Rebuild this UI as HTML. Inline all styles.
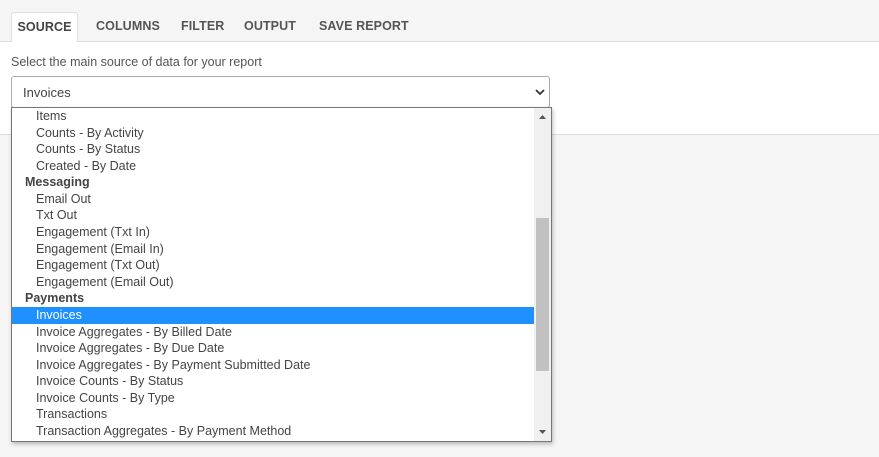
<!DOCTYPE html>
<html><head><style>
*{margin:0;padding:0;box-sizing:border-box}
body{width:879px;height:457px;background:#f5f5f5;font-family:"Liberation Sans",Arial,sans-serif;position:relative;overflow:hidden;color:#555}
.top{position:absolute;left:0;top:0;width:879px;height:42px;background:#f5f5f5;border-bottom:1px solid #ddd}
.tab{position:absolute;top:19px;font-size:12.5px;font-weight:bold;color:#555;letter-spacing:0.1px}
.tab.act{top:12px;left:11px;width:67px;height:31px;background:#fff;border:1px solid #ddd;border-bottom:none;border-radius:3px 3px 0 0;padding-top:7px;text-align:center;color:#444}
.panel{position:absolute;left:0;top:42px;width:879px;height:93px;background:#fff;border-bottom:1px solid #ddd}
.lbl{position:absolute;left:11px;top:55px;font-size:12.5px;color:#555}
.sel{position:absolute;left:11px;top:76px;width:539px;height:32px;border:1px solid #aaa;border-radius:3px;background:#fff;font-size:13px;color:#444;padding:8px 0 0 11px}
.dd{position:absolute;left:11px;top:107px;width:541px;height:335px;border:1px solid #777;background:#fff;box-shadow:1px 2px 4px rgba(0,0,0,.25);overflow:hidden;padding-top:0}
.r{height:16.58px;line-height:16.58px;font-size:12.5px;color:#444;padding-left:24px;width:522px;white-space:nowrap}
.g{padding-left:13px;font-weight:bold}
.h{background:#1e90ff;color:#fff}
.sb{position:absolute;right:0;top:0;width:17px;height:333px;background:#f0f0f0}
.th{position:absolute;left:2px;top:110px;width:13px;height:153px;background:#c1c1c1}
</style></head><body>
<div class="top">
<div class="tab act">SOURCE</div>
<div class="tab" style="left:96px">COLUMNS</div>
<div class="tab" style="left:181px">FILTER</div>
<div class="tab" style="left:244px">OUTPUT</div>
<div class="tab" style="left:319px">SAVE REPORT</div>
</div>
<div class="panel"></div>
<div class="lbl">Select the main source of data for your report</div>
<div class="sel">Invoices
<svg style="position:absolute;right:4px;top:11px" width="10" height="8" viewBox="0 0 10 8"><path d="M1 2L5 6L9 2" stroke="#333" stroke-width="1.8" fill="none"/></svg></div>
<div class="dd">
<div class="r">Items</div>
<div class="r">Counts - By Activity</div>
<div class="r">Counts - By Status</div>
<div class="r">Created - By Date</div>
<div class="r g">Messaging</div>
<div class="r">Email Out</div>
<div class="r">Txt Out</div>
<div class="r">Engagement (Txt In)</div>
<div class="r">Engagement (Email In)</div>
<div class="r">Engagement (Txt Out)</div>
<div class="r">Engagement (Email Out)</div>
<div class="r g">Payments</div>
<div class="r h">Invoices</div>
<div class="r">Invoice Aggregates - By Billed Date</div>
<div class="r">Invoice Aggregates - By Due Date</div>
<div class="r">Invoice Aggregates - By Payment Submitted Date</div>
<div class="r">Invoice Counts - By Status</div>
<div class="r">Invoice Counts - By Type</div>
<div class="r">Transactions</div>
<div class="r">Transaction Aggregates - By Payment Method</div>
<div class="sb"><svg style="position:absolute;left:5px;top:7px" width="7" height="4"><path d="M0 4L3.5 0L7 4Z" fill="#555"/></svg><div class="th"></div><svg style="position:absolute;left:5px;top:322px" width="7" height="4"><path d="M0 0L3.5 4L7 0Z" fill="#555"/></svg></div>
</div>
</body></html>
